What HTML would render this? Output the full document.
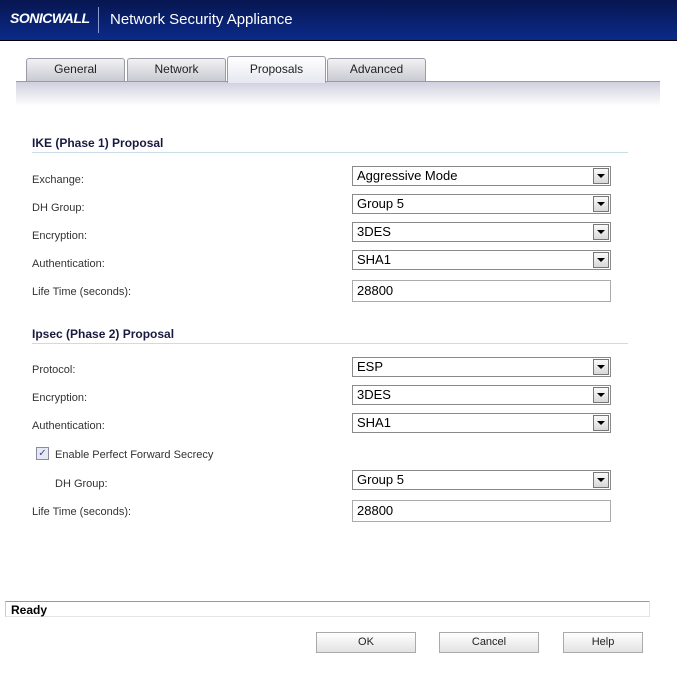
<!DOCTYPE html><html><head><style>
body{margin:0;width:677px;height:688px;background:#fff;font-family:"Liberation Sans",sans-serif;position:relative;overflow:hidden}
.a{position:absolute}
.hdr{left:0;top:0;width:677px;height:40px;background:linear-gradient(#071650,#0b2a8a);border-bottom:1px solid #000}
.tab{position:absolute;top:58px;height:22px;width:97px;border:1px solid #9a9aa8;border-bottom:none;border-radius:3px 3px 0 0;background:linear-gradient(#f2f2f4,#c9c9d2);font-size:12px;text-align:center;line-height:21px;color:#222}
.lbl{position:absolute;left:32px;font-size:11px;color:#333}
.sel,.inp{position:absolute;left:352px;width:253px;height:18px;border:1px solid #8a8a8a;font-size:13px;line-height:18px;padding-left:4px;box-sizing:content-box;color:#000}
.sel:after{content:"";position:absolute;right:1px;top:1px;width:14px;height:14px;border:1px solid #777;background:linear-gradient(#fafafa,#d8d8d8)}
.sel i{position:absolute;right:5px;top:7px;border:4px solid transparent;border-top:4px solid #000;z-index:2}
.inp{height:20px;line-height:20px;border-color:#aaa}
.h{position:absolute;left:32px;font-size:12px;font-weight:bold;color:#1a1a40;width:596px;border-bottom:1px solid #c8dde8;padding-bottom:2px}
.btn{position:absolute;top:632px;height:19px;width:98px;border:1px solid #aaa;background:linear-gradient(#fff,#e2e2e2);font-size:11px;text-align:center;line-height:19px;color:#222}
</style></head><body>
<div class="a hdr"></div>
<div class="a" style="left:10px;top:10px;color:#fff;font-size:14px;font-weight:bold;font-style:italic;letter-spacing:-0.5px">SONICWALL</div>
<div class="a" style="left:98px;top:7px;width:1px;height:26px;background:#8c9ad0"></div>
<div class="a" style="left:110px;top:11px;color:#fff;font-size:15px">Network Security Appliance</div>
<div class="a" style="left:16px;top:81px;width:644px;height:24px;border-top:1px solid #9a9aa8;background:linear-gradient(#cfd0de,#fff)"></div>
<div class="tab" style="left:26px">General</div>
<div class="tab" style="left:127px">Network</div>
<div class="tab" style="left:227px;top:56px;height:26px;background:linear-gradient(#fff,#e6e7f0);line-height:25px">Proposals</div>
<div class="tab" style="left:327px">Advanced</div>

<div class="h" style="top:136px">IKE (Phase 1) Proposal</div>
<div class="lbl" style="top:174px">Exchange:</div><div class="sel" style="top:166px">Aggressive Mode<i></i></div>
<div class="lbl" style="top:202px">DH Group:</div><div class="sel" style="top:194px">Group 5<i></i></div>
<div class="lbl" style="top:230px">Encryption:</div><div class="sel" style="top:222px">3DES<i></i></div>
<div class="lbl" style="top:258px">Authentication:</div><div class="sel" style="top:250px">SHA1<i></i></div>
<div class="lbl" style="top:286px">Life Time (seconds):</div><div class="inp" style="top:280px">28800</div>

<div class="h" style="top:327px">Ipsec (Phase 2) Proposal</div>
<div class="lbl" style="top:364px">Protocol:</div><div class="sel" style="top:357px">ESP<i></i></div>
<div class="lbl" style="top:392px">Encryption:</div><div class="sel" style="top:385px">3DES<i></i></div>
<div class="lbl" style="top:420px">Authentication:</div><div class="sel" style="top:413px">SHA1<i></i></div>
<div class="a" style="left:36px;top:447px;width:11px;height:11px;border:1px solid #8a8aa0;background:#e8e8f0;font-size:10px;line-height:11px;text-align:center;color:#3a4a9a">✓</div>
<div class="lbl" style="left:55px;top:449px">Enable Perfect Forward Secrecy</div>
<div class="lbl" style="left:55px;top:478px">DH Group:</div><div class="sel" style="top:470px">Group 5<i></i></div>
<div class="lbl" style="top:506px">Life Time (seconds):</div><div class="inp" style="top:500px">28800</div>

<div class="a" style="left:5px;top:601px;height:16px;border-top:1px solid #999;border-left:1px solid #ccc;border-bottom:1px solid #e4e4e4;border-right:1px solid #e4e4e4;font-size:12px;font-weight:bold;line-height:16px;padding-left:5px;box-sizing:border-box;width:645px">Ready</div>
<div class="btn" style="left:316px">OK</div>
<div class="btn" style="left:439px">Cancel</div>
<div class="btn" style="left:563px;width:78px">Help</div>
</body></html>
